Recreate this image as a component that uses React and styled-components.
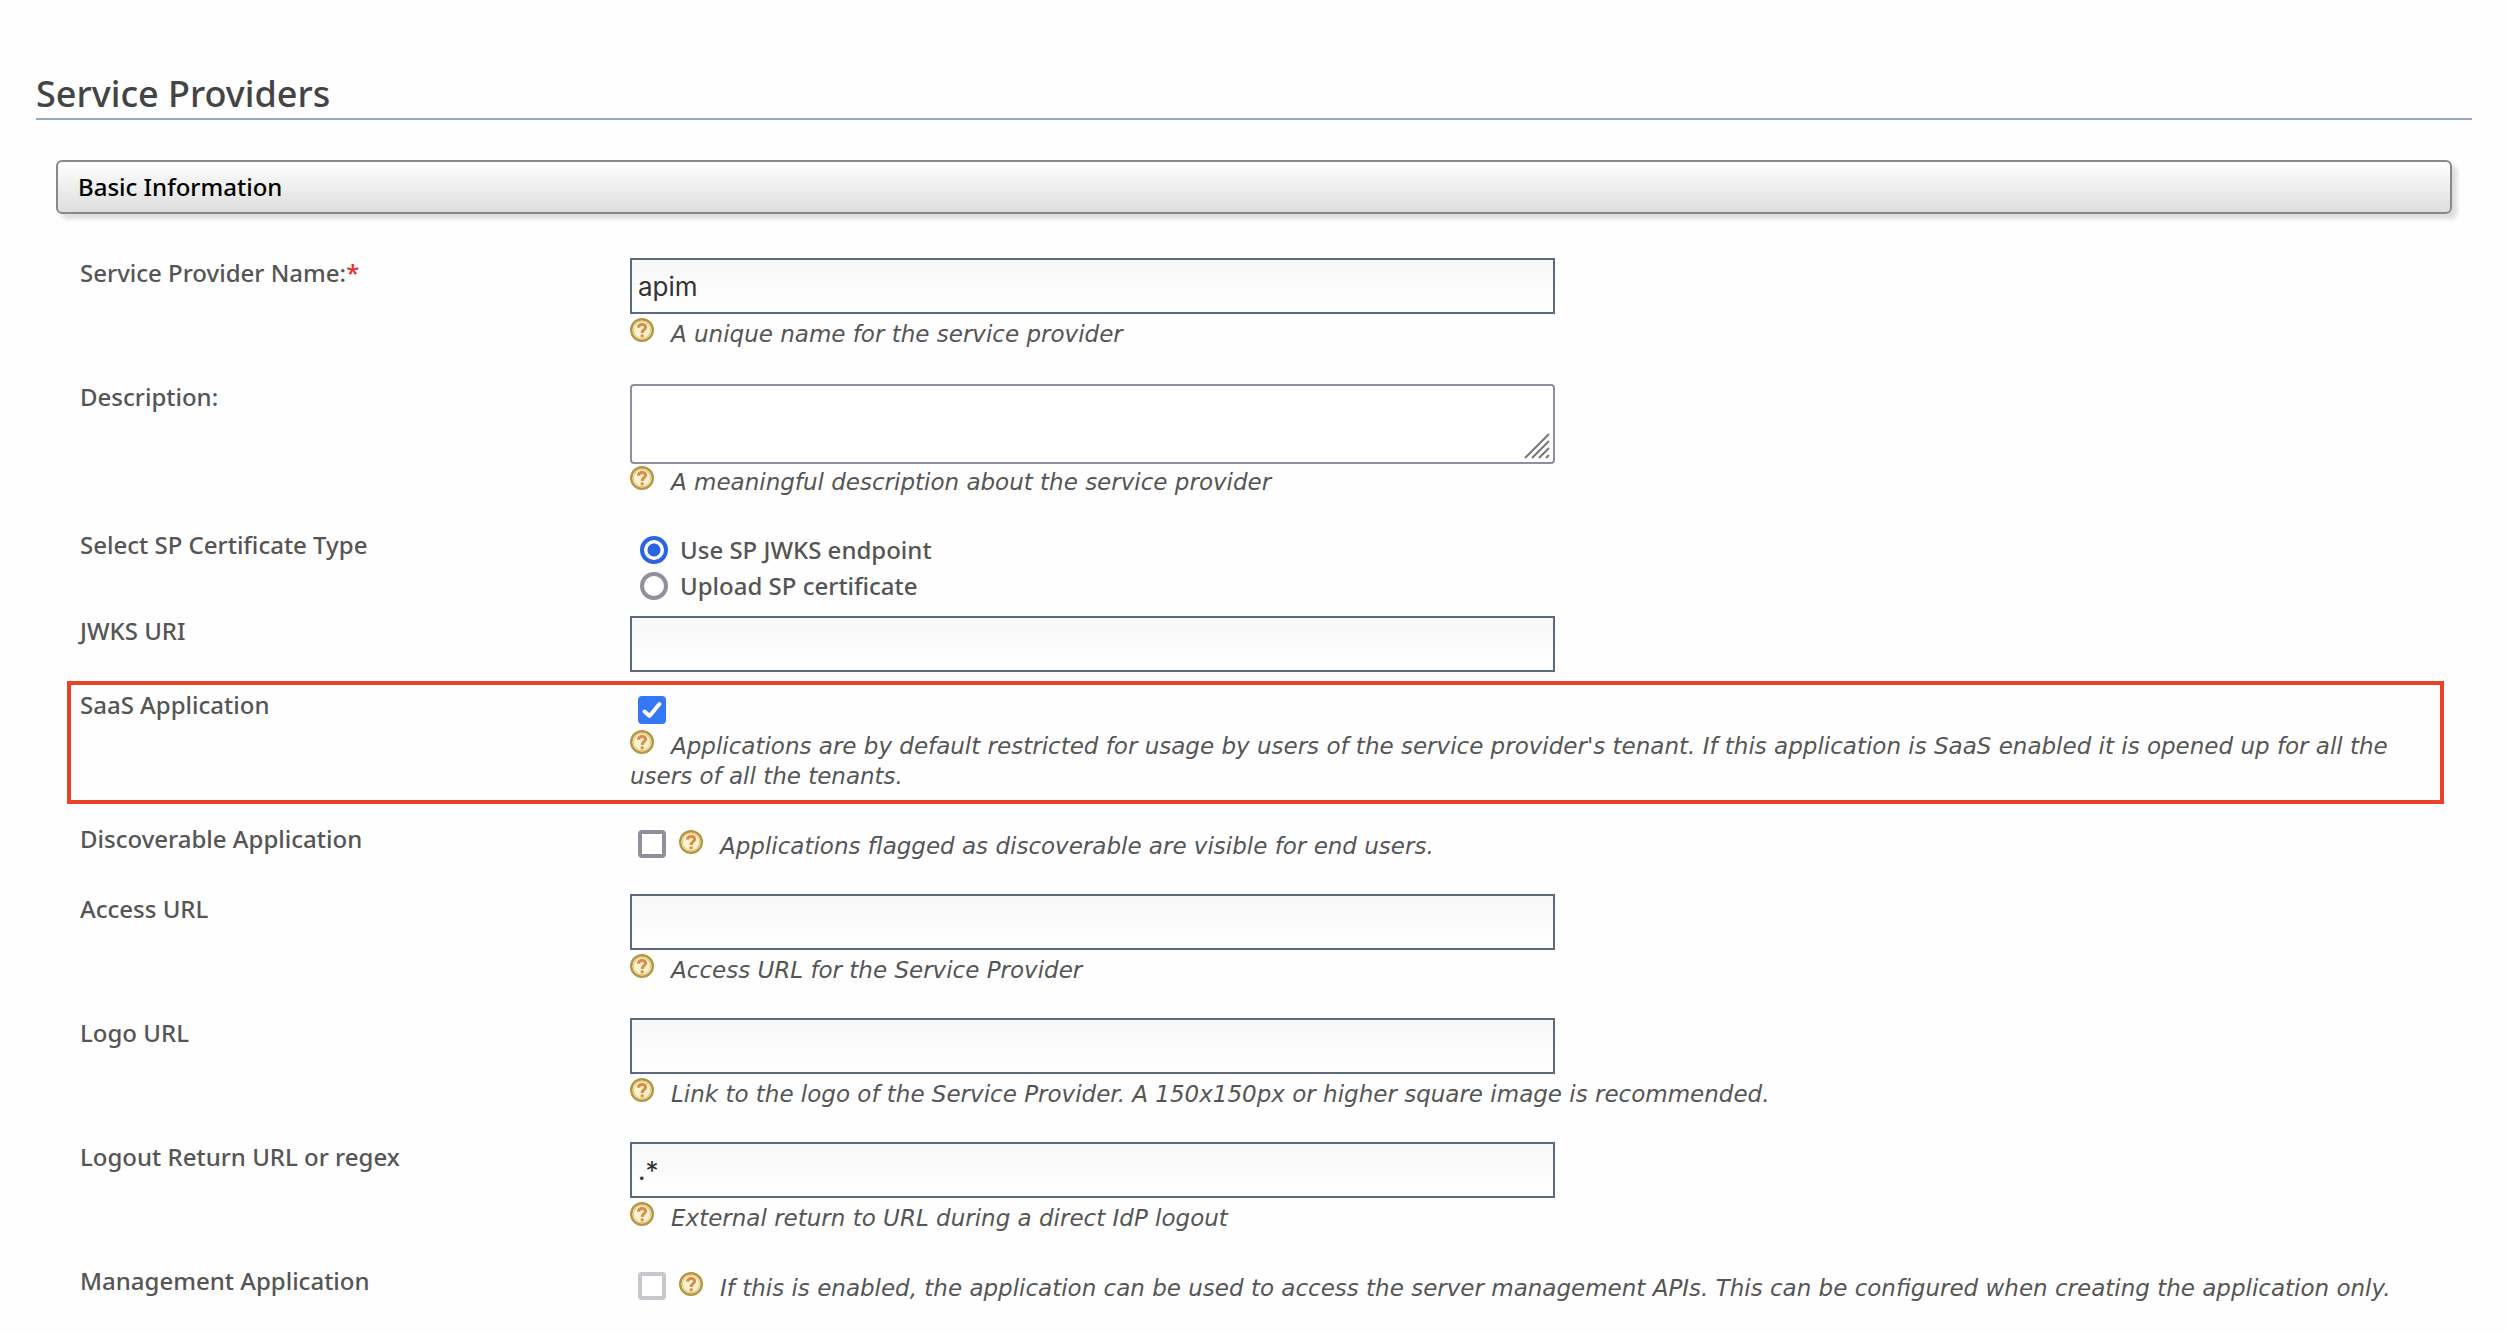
import React, { useState } from "react";
import styled, { createGlobalStyle } from "styled-components";

const App = () => {
  const [certType, setCertType] = useState("jwks");

  return (
    <Page>
      <GlobalStyle />
      <Title>Service Providers</Title>
      <Section>
        <SectionHeader>Basic Information</SectionHeader>
        <Form>
          <Row>
            <Label htmlFor="spName">
              Service Provider Name:<Required>*</Required>
            </Label>
            <Field>
              <TextInput id="spName" type="text" defaultValue="apim" />
              <HelpText>A unique name for the service provider</HelpText>
            </Field>
          </Row>

          <Row>
            <Label htmlFor="spDescription">Description:</Label>
            <Field>
              <TextAreaBox>
                <TextArea id="spDescription" />
                <Grip />
              </TextAreaBox>
              <HelpText gap={2}>
                A meaningful description about the service provider
              </HelpText>
            </Field>
          </Row>

          <Row $space={12}>
            <Label as="span" id="certType">
              Select SP Certificate Type
            </Label>
            <RadioGroup role="radiogroup" aria-labelledby="certType">
              <RadioLabel>
                <Radio
                  name="certType"
                  checked={certType === "jwks"}
                  onChange={() => setCertType("jwks")}
                />
                Use SP JWKS endpoint
              </RadioLabel>
              <RadioLabel>
                <Radio
                  name="certType"
                  checked={certType === "upload"}
                  onChange={() => setCertType("upload")}
                />
                Upload SP certificate
              </RadioLabel>
            </RadioGroup>
          </Row>

          <Row $space={18}>
            <Label htmlFor="jwksUri">JWKS URI</Label>
            <Field>
              <TextInput id="jwksUri" type="text" />
            </Field>
          </Row>

          <HighlightedRow>
            <Label htmlFor="saasApp">SaaS Application</Label>
            <Field>
              <CheckLine>
                <CheckBox id="saasApp" defaultChecked />
              </CheckLine>
              <HelpText gap={6}>
                Applications are by default restricted for usage by users of the
                service provider's tenant. If this application is SaaS enabled
                it is opened up for all the users of all the tenants.
              </HelpText>
            </Field>
          </HighlightedRow>

          <Row>
            <Label htmlFor="discoverable">Discoverable Application</Label>
            <CheckLine>
              <CheckBox id="discoverable" />
              <HelpText gap={0}>
                Applications flagged as discoverable are visible for end users.
              </HelpText>
            </CheckLine>
          </Row>

          <Row>
            <Label htmlFor="accessUrl">Access URL</Label>
            <Field>
              <TextInput id="accessUrl" type="text" />
              <HelpText>Access URL for the Service Provider</HelpText>
            </Field>
          </Row>

          <Row>
            <Label htmlFor="logoUrl">Logo URL</Label>
            <Field>
              <TextInput id="logoUrl" type="text" />
              <HelpText>
                Link to the logo of the Service Provider. A 150x150px or higher
                square image is recommended.
              </HelpText>
            </Field>
          </Row>

          <Row>
            <Label htmlFor="logoutUrl">Logout Return URL or regex</Label>
            <Field>
              <TextInput id="logoutUrl" type="text" defaultValue=".*" />
              <HelpText>External return to URL during a direct IdP logout</HelpText>
            </Field>
          </Row>

          <Row $space={0}>
            <Label htmlFor="managementApp">Management Application</Label>
            <CheckLine>
              <CheckBox id="managementApp" disabled />
              <HelpText gap={0}>
                If this is enabled, the application can be used to access the
                server management APIs. This can be configured when creating the
                application only.
              </HelpText>
            </CheckLine>
          </Row>
        </Form>
      </Section>
    </Page>
  );
};

const HelpText = ({ gap = 4, children }) => (
  <Help $gap={gap}>
    <HelpIcon viewBox="0 0 24 24" aria-hidden="true">
      <circle cx="12" cy="12" r="10.8" fill="#fffdf2" stroke="#b4963f" strokeWidth="2.4" />
      <circle cx="12" cy="12" r="8.6" fill="#fcf3cf" stroke="#e0cb85" strokeWidth="1.2" />
      <path
        d="M8.4 9.6C8.6 7.4 10.1 6.4 12.1 6.4C14.2 6.4 15.6 7.5 15.6 9.3C15.6 11.7 12.2 11.8 12.2 15"
        fill="none"
        stroke="#dd8a44"
        strokeWidth="3"
      />
      <rect x="10.7" y="16.4" width="3" height="2.8" fill="#dd8a44" />
    </HelpIcon>
    {children}
  </Help>
);

const CheckBox = (props) => (
  <CheckWrap>
    <Check type="checkbox" {...props} />
    <Tick viewBox="0 0 28 28" aria-hidden="true">
      <path d="M6.5 15.5L11.5 20L21.5 8" />
    </Tick>
  </CheckWrap>
);

const Grip = () => (
  <GripIcon viewBox="0 0 26 26" aria-hidden="true">
    <path d="M1 25L25 1M8 25L25 8M15 25L25 15M22 25L25 22" />
  </GripIcon>
);

const GlobalStyle = createGlobalStyle`
  body {
    margin: 0;
    background: #fefefe;
  }

  * {
    box-sizing: border-box;
  }
`;

const Page = styled.main`
  padding: 69px 34px 0 36px;
  font-family: "Noto Sans", "Open Sans", sans-serif;
  font-size: 24px;
  font-weight: 500;
  line-height: 30px;
  color: #555;
`;

const Title = styled.h1`
  margin: 0;
  border-bottom: 2px solid #96a5c8;
  font-size: 36px;
  font-weight: 500;
  line-height: 49px;
  color: #444;
`;

const Section = styled.section`
  margin: 40px 20px 0;
`;

const SectionHeader = styled.h2`
  margin: 0;
  padding: 10px 20px;
  border: 2px solid #888;
  border-radius: 6px;
  background: linear-gradient(#fff, #ddd);
  box-shadow: 5px 5px 4px #ddd;
  font-size: 24px;
  font-weight: 500;
  color: #000;
`;

const Form = styled.form`
  padding: 44px 0 0 24px;
`;

const Row = styled.div`
  display: grid;
  grid-template-columns: 550px 1fr;
  align-items: start;
  padding-bottom: ${({ $space = 33 }) => $space}px;
`;

const HighlightedRow = styled(Row)`
  position: relative;

  &::after {
    content: "";
    position: absolute;
    inset: -9px 8px 20px -13px;
    border: 4px solid #eb4127;
    pointer-events: none;
  }
`;

const Label = styled.label`
  padding-right: 20px;
`;

const Required = styled.span`
  color: #f02828;
`;

const Field = styled.div`
  min-width: 0;
`;

const TextInput = styled.input`
  display: block;
  width: 925px;
  max-width: 100%;
  height: 56px;
  padding: 0 6px;
  border: 2px solid #5c6a7e;
  border-radius: 0;
  background: linear-gradient(#f7f7f7, #fff);
  font-family: Inter, sans-serif;
  font-size: 26px;
  color: #333;
  outline: none;
`;

const TextAreaBox = styled.div`
  position: relative;
  width: 925px;
  max-width: 100%;
  padding-top: 2px;
`;

const TextArea = styled.textarea`
  display: block;
  width: 100%;
  height: 80px;
  border: 2px solid #8f8f9d;
  border-radius: 4px;
  background: #fff;
  font-family: Inter, sans-serif;
  font-size: 26px;
  resize: none;
  outline: none;
`;

const GripIcon = styled.svg`
  position: absolute;
  right: 5px;
  bottom: 5px;
  width: 26px;
  height: 26px;
  fill: none;
  stroke: #777;
  stroke-width: 2;
`;

const Help = styled.div`
  margin-top: ${({ $gap }) => $gap}px;
  font-family: "DejaVu Sans", "Noto Sans", sans-serif;
  font-size: 23px;
  font-style: italic;
  font-weight: 400;
`;

const HelpIcon = styled.svg`
  width: 24px;
  height: 24px;
  margin-right: 17px;
  vertical-align: baseline;
`;

const RadioGroup = styled.div`
  display: flex;
  flex-direction: column;
  padding: 2px 0 0 10px;
`;

const RadioLabel = styled.label`
  display: flex;
  align-items: center;
  gap: 12px;
  line-height: 36px;
`;

const Radio = styled.input.attrs({ type: "radio" })`
  appearance: none;
  width: 28px;
  height: 28px;
  margin: 0;
  border: 4px solid #8f8f9d;
  border-radius: 50%;
  background: #fff;

  &:checked {
    border-color: #2a66de;
    background: radial-gradient(circle, #2a66de 6px, #fff 7px);
  }
`;

const CheckLine = styled.div`
  display: flex;
  align-items: flex-start;
  gap: 13px;
  padding: 6px 0 0 8px;
`;

const CheckWrap = styled.span`
  display: grid;
  flex: none;

  & > * {
    grid-area: 1 / 1;
  }
`;

const Tick = styled.svg`
  width: 28px;
  height: 28px;
  fill: none;
  stroke: none;
  stroke-width: 4;
  stroke-linecap: round;
  stroke-linejoin: round;
  pointer-events: none;
`;

const Check = styled.input`
  appearance: none;
  width: 28px;
  height: 28px;
  margin: 0;
  border: 4px solid #8f8f9d;
  border-radius: 4px;
  background: #fff;

  &:checked {
    border-color: #3478f6;
    background: #3478f6;
  }

  &:checked + ${Tick} {
    stroke: #fff;
  }

  &:disabled {
    border-color: #c7c7ce;
  }
`;

export default App;
